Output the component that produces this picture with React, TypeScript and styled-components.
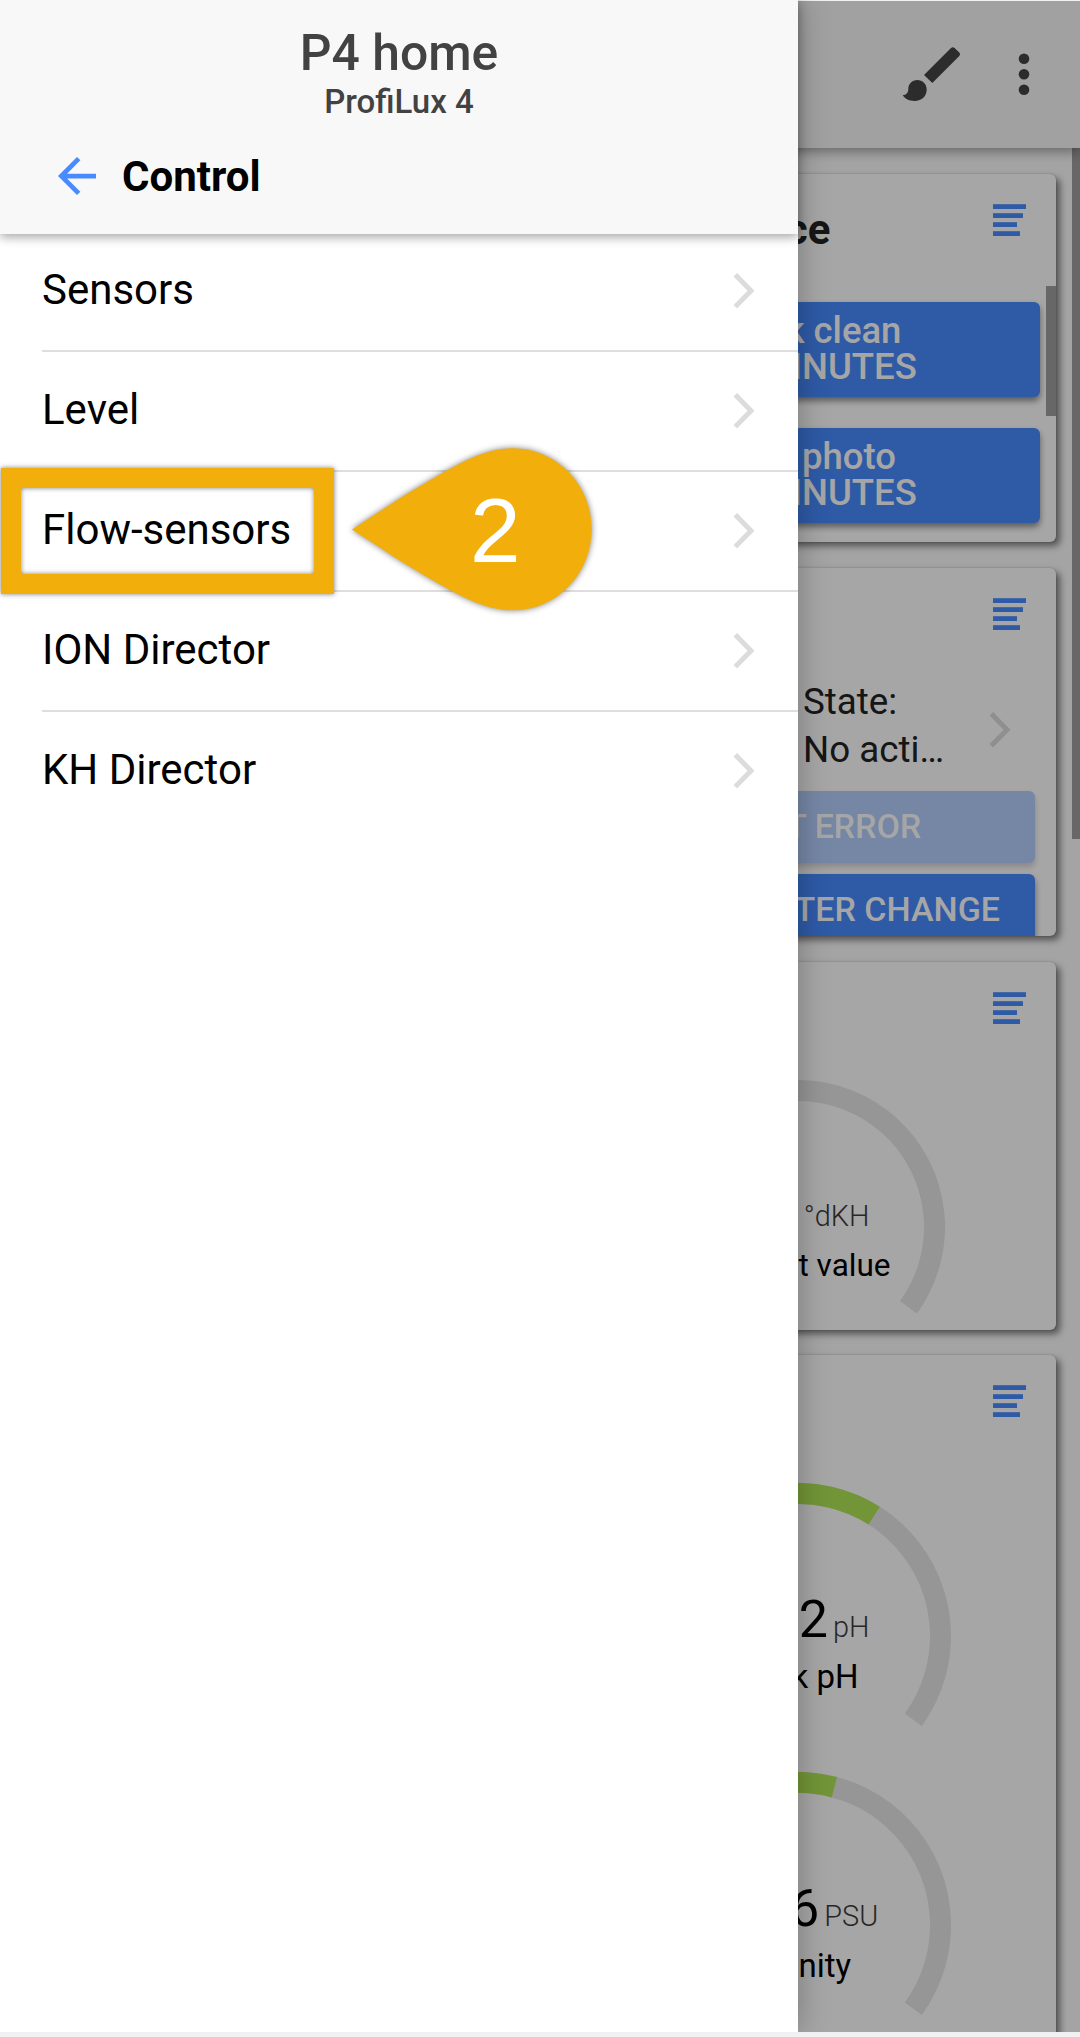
import React from 'react';
import styled, { createGlobalStyle } from 'styled-components';

const GlobalStyle = createGlobalStyle`
  *, *::before, *::after { box-sizing: border-box; }
  body {
    margin: 0;
    background: #f1f1f1;
    font-family: Roboto, "Liberation Sans", sans-serif;
    color: #000;
  }
`;

const Screen = styled.div`
  position: relative;
  width: 1080px;
  height: 2037px;
  padding: 1px 0 5px;
  overflow: hidden;
`;

/* ---------- dashboard ---------- */

const Dashboard = styled.main`
  position: relative;
  height: 2031px;
  overflow: hidden;
  background: #fcfcfc;
`;

const Toolbar = styled.header`
  position: relative;
  z-index: 1;
  display: flex;
  justify-content: flex-end;
  align-items: flex-start;
  height: 147px;
  padding: 45px 50px 0 0;
  gap: 55.6px;
  background: #f8f8f8;
  box-shadow: 0 3px 12px rgba(0, 0, 0, 0.4);
`;

const DotsIcon = styled.svg`
  margin-top: 7px;
`;

const Scroller = styled.div`
  display: flex;
  justify-content: space-between;
  height: 1884px;
`;

const Cards = styled.div`
  display: flex;
  flex-direction: column;
  gap: 25.8px;
  width: 516px;
  margin-left: 540px;
  padding-top: 26px;
`;

const ScrollThumb = styled.div<{ $w: number; $h: number }>`
  flex: none;
  width: ${(p) => p.$w}px;
  height: ${(p) => p.$h}px;
  background: #9f9f9f;
`;

const CardFrame = styled.section<{ $height: number }>`
  flex: none;
  display: flex;
  flex-direction: column;
  height: ${(p) => p.$height}px;
  overflow: hidden;
  border-radius: 6px;
  background: #fff;
  box-shadow: 4px 4px 7px rgba(0, 0, 0, 0.5), 0 0 2px rgba(0, 0, 0, 0.2);
`;

const CardHeader = styled.div<{ $height: number }>`
  flex: none;
  display: flex;
  justify-content: flex-end;
  align-items: flex-start;
  gap: 163px;
  height: ${(p) => p.$height}px;
  padding: 30px 29.6px 0 0;
`;

const CardTitle = styled.h2`
  margin: 1px 0 0;
  font-size: 42px;
  line-height: 50px;
  font-weight: 700;
  color: #222;
`;

const CardScroll = styled.div`
  display: flex;
  justify-content: space-between;
  height: 256px;
`;

const ReminderList = styled.div`
  display: flex;
  flex-direction: column;
  gap: 31px;
  width: 484px;
  margin-left: 16px;
  padding-top: 16px;
`;

const ReminderButton = styled.button`
  height: 95px;
  padding: 0 0 1px;
  border: 0;
  border-radius: 6px;
  background: #488aff;
  box-shadow: 0 4px 6px rgba(0, 0, 0, 0.45);
  color: #fff;
  font: 500 36.5px/36px Roboto, sans-serif;
`;

const Line = styled.span<{ $indent?: number }>`
  display: block;
  padding-left: ${(p) => p.$indent ?? 0}px;
`;

const StateRow = styled.div`
  flex: none;
  display: flex;
  justify-content: space-between;
  padding: 0 45px 0 263px;
  height: 113px;
`;

const StateText = styled.div`
  width: 150px;
  font-size: 36.75px;
  line-height: 48px;
  color: #222;
`;

const StateValue = styled.div`
  overflow: hidden;
  white-space: nowrap;
  text-overflow: ellipsis;
`;

const StateArrow = styled.div`
  padding-top: 33px;
`;

const ActionButton = styled.button<{ $faded?: boolean }>`
  flex: none;
  width: 438px;
  height: 72px;
  margin: 0 0 11px 57px;
  padding: ${(p) => (p.$faded ? '0 5px 1px 0' : '0 0 1px 2px')};
  border: 0;
  border-radius: 6px;
  background: #488aff;
  box-shadow: 0 4px 6px rgba(0, 0, 0, 0.45);
  color: #fff;
  opacity: ${(p) => (p.$faded ? 0.4 : 1)};
  font: 500 34px/40px Roboto, sans-serif;
  white-space: nowrap;
`;

const GaugeBox = styled.div<{ $height: number }>`
  flex: none;
  display: grid;
  justify-items: center;
  height: ${(p) => p.$height}px;
  & > * { grid-area: 1 / 1; }
`;

const GaugeText = styled.div<{ $top: number }>`
  display: flex;
  flex-direction: column;
  align-items: center;
  padding-top: ${(p) => p.$top}px;
`;

const Reading = styled.div`
  display: flex;
  align-items: baseline;
  gap: 5px;
  font-size: 52px;
  line-height: 60px;
  white-space: nowrap;
`;

const Unit = styled.span`
  font-size: 28.9px;
  font-weight: 300;
  color: #3c3c3c;
`;

const GaugeLabel = styled.div<{ $size: number }>`
  font-size: ${(p) => p.$size}px;
  line-height: 40px;
  white-space: nowrap;
`;

const Backdrop = styled.div`
  position: absolute;
  z-index: 2;
  inset: 0;
  background: rgba(0, 0, 0, 0.35);
`;

/* ---------- drawer ---------- */

const Drawer = styled.aside`
  position: absolute;
  z-index: 3;
  top: 0;
  left: 0;
  width: 798px;
  height: 2032px;
  background: #fff;
  box-shadow: 0 0 30px rgba(0, 0, 0, 0.28);
  clip-path: inset(0 -40px 0 0);
`;

const DrawerHeader = styled.header`
  position: relative;
  z-index: 1;
  height: 234px;
  padding-top: 23px;
  background: #f8f8f8;
  box-shadow: 0 3px 10px rgba(0, 0, 0, 0.36);
  text-align: center;
  font-weight: 500;
  color: #424242;
`;

const DeviceName = styled.div`
  font-size: 49.8px;
  line-height: 60px;
`;

const DeviceModel = styled.div`
  margin-top: -1px;
  font-size: 33px;
  line-height: 40px;
`;

const BackRow = styled.div`
  display: flex;
  align-items: center;
  gap: 26px;
  height: 54px;
  margin-top: 27px;
  padding-left: 58px;
  color: #000;
  font-size: 42px;
  font-weight: 700;
`;

const Menu = styled.nav`
  margin-top: -2px;
`;

const MenuItem = styled.div<{ $last: boolean }>`
  display: flex;
  justify-content: space-between;
  align-items: center;
  height: 120px;
  margin-left: 42px;
  padding: ${(p) => (p.$last ? '0 43px 4px 0' : '0 43px 2px 0')};
  border-bottom: ${(p) => (p.$last ? 'none' : '2px solid #dedede')};
  font-size: 42px;
  line-height: 50px;
`;

/* ---------- tutorial annotations ---------- */

const Highlight = styled.div`
  position: absolute;
  z-index: 4;
  left: 1px;
  top: 468px;
  width: 333px;
  height: 126px;
  border: 20.5px solid #f2af0b;
  box-shadow: 0 0 5px rgba(0, 0, 0, 0.5), inset 0 0 5px rgba(0, 0, 0, 0.5);
`;

const Callout = styled.div`
  position: absolute;
  z-index: 4;
  left: 342px;
  top: 438px;
  display: grid;
  & > * { grid-area: 1 / 1; }
`;

const Drop = styled.svg`
  filter: drop-shadow(0 0 3px rgba(0, 0, 0, 0.5));
`;

const StepNumber = styled.span`
  z-index: 1;
  padding: 43px 0 0 128px;
  color: #fff;
  font: 91px/100px "Liberation Sans", Arial, sans-serif;
`;

/* ---------- icons ---------- */

const BrushIcon = () => (
  <svg width="60" height="58" viewBox="0 0 60 58" fill="#444">
    <path d="M22 29 L49 2 Q50.8 .4 52.6 2 L57.3 6.6 Q59 8.3 57.3 10 L30.3 37Z" />
    <path d="M.7 49.3C4.5 49 6.3 46.5 6.3 43C6.3 38 10 34 15.3 34C20.5 34 24.7 38 24.7 43.5C24.7 50 20 55 12.5 55C7.5 55 3 53 .7 49.3Z" />
  </svg>
);

const MoreIcon = () => (
  <DotsIcon width="12" height="44" viewBox="0 0 12 44" fill="#444">
    <circle cx="6" cy="5.7" r="5.3" />
    <circle cx="6" cy="21.2" r="5.3" />
    <circle cx="6" cy="36.7" r="5.3" />
  </DotsIcon>
);

const LinesIcon = () => (
  <svg width="33" height="32" viewBox="0 0 33 32" fill="#488aff">
    <rect y="0.2" width="33" height="4.8" />
    <rect y="9.2" width="30" height="4.8" />
    <rect y="18.2" width="24" height="4.8" />
    <rect y="27.2" width="27" height="4.8" />
  </svg>
);

const Chevron = () => (
  <svg width="22" height="37" viewBox="0 0 22 37" fill="none" stroke="#dcdcdc" strokeWidth="5">
    <path d="M2.3 2.8 L18 18.8 L2.3 34.8" />
  </svg>
);

const BackIcon = () => (
  <svg width="38" height="38" viewBox="0 0 16 16" fill="#488aff">
    <path d="M16 7H3.83l5.59-5.59L8 0 0 8l8 8 1.41-1.41L3.83 9H16z" />
  </svg>
);

/* ---------- gauge ---------- */

const SWEEP = 126;

const arc = (r: number, c: number, from: number, to: number) => {
  const at = (deg: number) => {
    const a = (deg * Math.PI) / 180;
    return `${(c + r * Math.sin(a)).toFixed(2)} ${(c - r * Math.cos(a)).toFixed(2)}`;
  };
  return `M${at(from)} A${r} ${r} 0 ${to - from > 180 ? 1 : 0} 1 ${at(to)}`;
};

interface GaugeProps {
  radius: number;
  height: number;
  fillTo?: number;
  value: string;
  unit: string;
  label: string;
  textTop: number;
  labelSize: number;
}

const Gauge = ({ radius, height, fillTo, value, unit, label, textTop, labelSize }: GaugeProps) => {
  const size = radius * 2;
  const mid = radius - 10.5;
  return (
    <GaugeBox $height={height}>
      <svg width={size} height={size} viewBox={`0 0 ${size} ${size}`} fill="none" strokeWidth="21">
        <path d={arc(mid, radius, -SWEEP, SWEEP)} stroke="#e6e6e6" />
        {fillTo !== undefined && <path d={arc(mid, radius, -SWEEP, fillTo)} stroke="#b0e555" />}
      </svg>
      <GaugeText $top={textTop}>
        <Reading>
          {value}
          <Unit>{unit}</Unit>
        </Reading>
        <GaugeLabel $size={labelSize}>{label}</GaugeLabel>
      </GaugeText>
    </GaugeBox>
  );
};

const menuItems = ['Sensors', 'Level', 'Flow-sensors', 'ION Director', 'KH Director'];
const reminders = [
  { name: 'Tank clean', indent: 31 },
  { name: 'Take photo', indent: 15 },
];

export default function App() {
  return (
    <Screen>
      <GlobalStyle />
      <Dashboard>
        <Toolbar>
          <BrushIcon />
          <MoreIcon />
        </Toolbar>
        <Scroller>
          <Cards>
            <CardFrame $height={368}>
              <CardHeader $height={112}>
                <CardTitle>Maintenance</CardTitle>
                <LinesIcon />
              </CardHeader>
              <CardScroll>
                <ReminderList>
                  {reminders.map((r) => (
                    <ReminderButton key={r.name}>
                      <Line $indent={r.indent}>{r.name}</Line>
                      <Line $indent={30}>30 MINUTES</Line>
                    </ReminderButton>
                  ))}
                </ReminderList>
                <ScrollThumb $w={10} $h={130} />
              </CardScroll>
            </CardFrame>

            <CardFrame $height={368}>
              <CardHeader $height={110}>
                <LinesIcon />
              </CardHeader>
              <StateRow>
                <StateText>
                  <div>State:</div>
                  <StateValue>No action</StateValue>
                </StateText>
                <StateArrow>
                  <Chevron />
                </StateArrow>
              </StateRow>
              <ActionButton $faded>RESET ERROR</ActionButton>
              <ActionButton>START WATER CHANGE</ActionButton>
            </CardFrame>

            <CardFrame $height={368}>
              <CardHeader $height={118}>
                <LinesIcon />
              </CardHeader>
              <Gauge radius={147} height={240} value="0.0" unit="°dKH" label="Current value" textTop={99.6} labelSize={31.5} />
            </CardFrame>

            <CardFrame $height={720}>
              <CardHeader $height={128}>
                <LinesIcon />
              </CardHeader>
              <Gauge radius={153} height={288.7} fillTo={32.3} value="8.12" unit="pH" label="Tank pH" textTop={106.6} labelSize={33} />
              <Gauge radius={153} height={288.7} fillTo={14.8} value="34.6" unit="PSU" label="Salinity" textTop={106.6} labelSize={33} />
            </CardFrame>
          </Cards>
          <ScrollThumb $w={8} $h={691} />
        </Scroller>
        <Backdrop />
      </Dashboard>

      <Drawer>
        <DrawerHeader>
          <DeviceName>P4 home</DeviceName>
          <DeviceModel>ProfiLux 4</DeviceModel>
          <BackRow>
            <BackIcon />
            Control
          </BackRow>
        </DrawerHeader>
        <Menu>
          {menuItems.map((name, i) => (
            <MenuItem key={name} $last={i === menuItems.length - 1}>
              {name}
              <Chevron />
            </MenuItem>
          ))}
        </Menu>
      </Drawer>

      <Highlight />
      <Callout>
        <Drop width="260" height="182" viewBox="342 438 260 182" fill="#f2af0b">
          <path d="M352 529.5C380 511.3 402 496.3 430 480.3S484 448.3 513 448.3A78.7 81 0 0 1 513 610.3C484 610.3 458 594.7 430 578.7S380 547.7 352 529.5Z" />
        </Drop>
        <StepNumber>2</StepNumber>
      </Callout>
    </Screen>
  );
}
